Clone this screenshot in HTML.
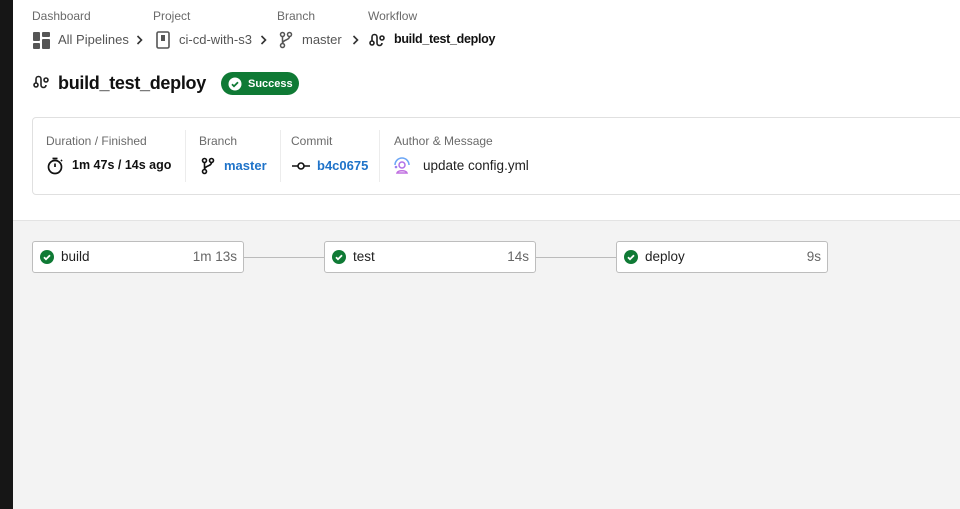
<!DOCTYPE html>
<html><head><meta charset="utf-8"><style>
*{margin:0;padding:0;box-sizing:border-box}
body{width:960px;height:509px;overflow:hidden;background:#fff;font-family:"Liberation Sans",sans-serif;position:relative}
.strip{position:absolute;left:0;top:0;width:13px;height:509px;background:#161616}
.a{position:absolute;white-space:nowrap}
.lbl{font-size:12px;color:#6a6a6a}
.bc{font-size:13px;color:#555;top:32px}
.card{position:absolute;left:32px;top:117px;width:940px;height:78px;border:1px solid #e0e0e0;border-radius:4px}
.sep{position:absolute;top:130px;width:1px;height:52px;background:#ececec}
.gray{position:absolute;left:13px;top:220px;width:947px;height:289px;background:#f3f3f3;border-top:1px solid #e3e3e3}
.job{position:absolute;top:241px;width:212px;height:32px;background:#fff;border:1px solid #bdbdbd;border-radius:3px;font-size:13.5px;color:#222}
.job .n{position:absolute;left:28px;top:7px}
.job .t{position:absolute;right:6px;top:7px;color:#666}
.job .c{position:absolute;left:7px;top:8px}
.line{position:absolute;top:257px;height:1px;background:#bbb}
</style></head><body>
<div class="strip"></div>
<div class="a lbl" style="left:32px;top:9px">Dashboard</div>
<div class="a lbl" style="left:153px;top:9px">Project</div>
<div class="a lbl" style="left:277px;top:9px">Branch</div>
<div class="a lbl" style="left:368px;top:9px">Workflow</div>
<svg class="a" style="left:33px;top:32px" width="17" height="17" viewBox="0 0 17 17" fill="#555"><rect x="0" y="0" width="7" height="9" rx="1"/><rect x="9" y="0" width="8" height="5" rx="1"/><rect x="0" y="11" width="7" height="6" rx="1"/><rect x="9" y="7" width="8" height="10" rx="1"/></svg>
<div class="a bc" style="left:58px">All Pipelines</div>
<svg class="a" style="left:136px;top:35px" width="7" height="10" viewBox="0 0 7 10"><path d="M1.5 1l4 4-4 4" fill="none" stroke="#333" stroke-width="1.6"/></svg>
<svg class="a" style="left:156px;top:31px" width="14" height="18" viewBox="0 0 14 18"><rect x="1" y="1" width="12" height="16" rx="1.5" fill="none" stroke="#555" stroke-width="1.6"/><rect x="5" y="4" width="4" height="6" fill="#555"/></svg>
<div class="a bc" style="left:179px">ci-cd-with-s3</div>
<svg class="a" style="left:260px;top:35px" width="7" height="10" viewBox="0 0 7 10"><path d="M1.5 1l4 4-4 4" fill="none" stroke="#333" stroke-width="1.6"/></svg>
<svg class="a" style="left:279px;top:31px" width="14" height="18" viewBox="0 0 14 18" fill="none" stroke="#555" stroke-width="1.5"><circle cx="3.5" cy="3.5" r="2"/><circle cx="10.5" cy="3.5" r="2"/><circle cx="3.5" cy="14.5" r="2"/><path d="M3.5 5.5v7M10.5 5.5c0 4-7 3-7 7"/></svg>
<div class="a bc" style="left:302px">master</div>
<svg class="a" style="left:352px;top:35px" width="7" height="10" viewBox="0 0 7 10"><path d="M1.5 1l4 4-4 4" fill="none" stroke="#333" stroke-width="1.6"/></svg>
<svg class="a" style="left:369px;top:33px" width="17" height="14" viewBox="0 0 17 14" fill="none" stroke="#222" stroke-width="1.6"><circle cx="3" cy="10" r="2"/><path d="M3 8V4a2.5 2.5 0 0 1 5 0v6a2.5 2.5 0 0 0 5 0"/><circle cx="13" cy="5" r="2"/></svg>
<div class="a bc" style="left:394px;color:#111;font-weight:bold;font-size:12.5px;letter-spacing:-0.3px;top:32px">build_test_deploy</div>
<svg class="a" style="left:33px;top:75px" width="17" height="14" viewBox="0 0 17 14" fill="none" stroke="#222" stroke-width="1.6"><circle cx="3" cy="10" r="2"/><path d="M3 8V4a2.5 2.5 0 0 1 5 0v6a2.5 2.5 0 0 0 5 0"/><circle cx="13" cy="5" r="2"/></svg>
<div class="a" style="left:58px;top:73px;font-size:18px;letter-spacing:-0.3px;font-weight:bold;color:#111">build_test_deploy</div>
<div class="a" style="left:221px;top:72px;width:78px;height:23px;background:#0f7a35;border-radius:12px;color:#fff;font-size:11px;font-weight:bold;padding:6px 0 0 27px">Success</div>
<svg class="a" style="left:228px;top:77px" width="14" height="14" viewBox="0 0 14 14"><circle cx="7" cy="7" r="6.5" fill="#fff"/><path d="M4 7.2l2 2 4-4" stroke="#0f7a35" stroke-width="1.8" fill="none"/></svg>
<div class="card"></div>
<div class="sep" style="left:185px"></div><div class="sep" style="left:280px"></div><div class="sep" style="left:379px"></div>
<div class="a lbl" style="left:46px;top:134px">Duration / Finished</div>
<div class="a lbl" style="left:199px;top:134px">Branch</div>
<div class="a lbl" style="left:291px;top:134px">Commit</div>
<div class="a lbl" style="left:394px;top:134px">Author &amp; Message</div>
<svg class="a" style="left:46px;top:157px" width="18" height="18" viewBox="0 0 18 18" fill="none" stroke="#111" stroke-width="1.7"><circle cx="9" cy="10" r="6.5"/><path d="M9 10V6.5M6.5 1.5h5M15 4l1-1"/></svg>
<div class="a" style="left:72px;top:158px;font-size:12.5px;font-weight:bold;color:#111">1m 47s / 14s ago</div>
<svg class="a" style="left:201px;top:157px" width="14" height="18" viewBox="0 0 14 18" fill="none" stroke="#111" stroke-width="1.6"><circle cx="3.5" cy="3.5" r="2"/><circle cx="10.5" cy="3.5" r="2"/><circle cx="3.5" cy="14.5" r="2"/><path d="M3.5 5.5v7M10.5 5.5c0 4-7 3-7 7"/></svg>
<div class="a" style="left:224px;top:158px;font-size:13px;font-weight:bold;color:#1f73c9">master</div>
<svg class="a" style="left:292px;top:160px" width="18" height="12" viewBox="0 0 18 12" fill="none" stroke="#111" stroke-width="1.6"><circle cx="9" cy="6" r="3"/><path d="M0 6h6M12 6h6"/></svg>
<div class="a" style="left:317px;top:158px;font-size:13px;font-weight:bold;color:#1f73c9">b4c0675</div>
<svg class="a" style="left:392px;top:155px" width="20" height="20" viewBox="0 0 20 20" fill="none" stroke-width="1.5"><path d="M3 10a7 7 0 0 1 14 0" stroke="#6aa5f5"/><circle cx="10" cy="10" r="3" stroke="#b070e8"/><path d="M5 18c1-3 9-3 10 0z" stroke="#c070e0"/><circle cx="4" cy="12" r="1.3" fill="#9a80f0" stroke="none"/></svg>
<div class="a" style="left:423px;top:158px;font-size:13.5px;color:#222">update config.yml</div>
<div class="gray"></div>
<div class="line" style="left:243px;width:82px"></div>
<div class="line" style="left:535px;width:82px"></div>
<div class="job" style="left:32px"><svg class="c" width="14" height="14" viewBox="0 0 14 14"><circle cx="7" cy="7" r="7" fill="#0f7a35"/><path d="M4 7.2l2 2 4-4" stroke="#fff" stroke-width="1.8" fill="none"/></svg><span class="n">build</span><span class="t">1m 13s</span></div>
<div class="job" style="left:324px"><svg class="c" width="14" height="14" viewBox="0 0 14 14"><circle cx="7" cy="7" r="7" fill="#0f7a35"/><path d="M4 7.2l2 2 4-4" stroke="#fff" stroke-width="1.8" fill="none"/></svg><span class="n">test</span><span class="t">14s</span></div>
<div class="job" style="left:616px"><svg class="c" width="14" height="14" viewBox="0 0 14 14"><circle cx="7" cy="7" r="7" fill="#0f7a35"/><path d="M4 7.2l2 2 4-4" stroke="#fff" stroke-width="1.8" fill="none"/></svg><span class="n">deploy</span><span class="t">9s</span></div>
</body></html>
